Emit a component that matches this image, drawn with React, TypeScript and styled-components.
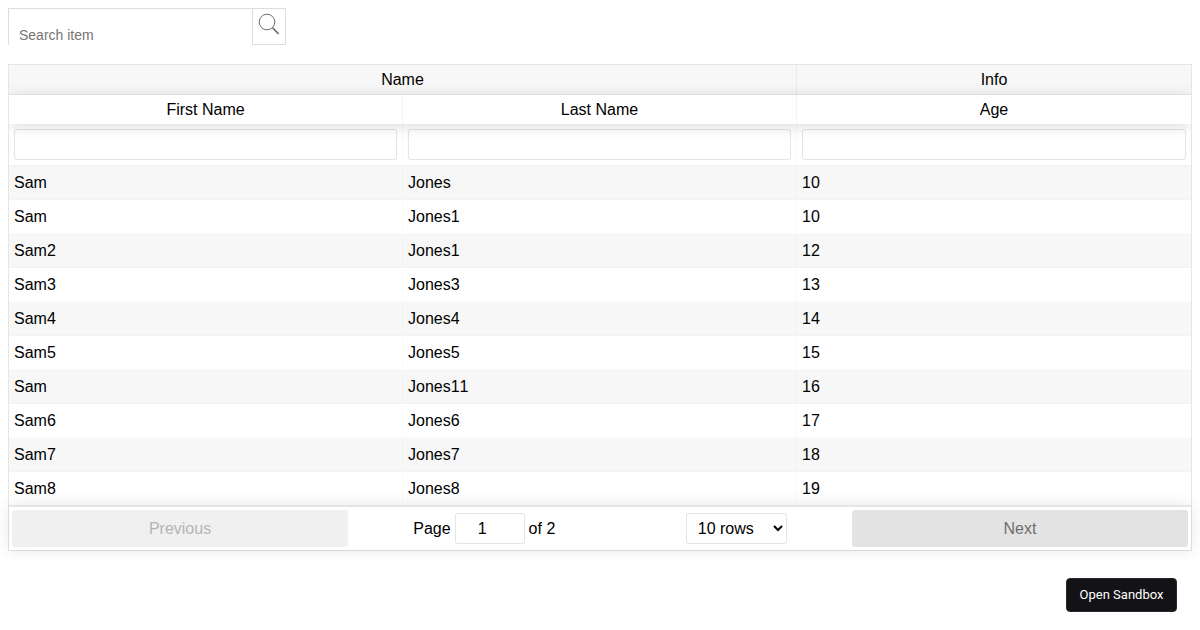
import React from "react";
import styled, { createGlobalStyle } from "styled-components";

const Global = createGlobalStyle`
  html, body { margin: 0; padding: 0; background: #fff; }
  body { font-family: "Liberation Sans", Arial, sans-serif; font-size: 16px; color: #000; height: 630px; overflow: hidden; font-kerning: none; }
  * { box-sizing: border-box; }
  input, select, button { font-kerning: none; }
`;

const Page = styled.div`
  padding: 8px 8px 0;
  display: flex;
  flex-direction: column;
`;

const SearchBar = styled.div`
  display: flex;
  height: 37px;
  margin-bottom: 19px;
`;

const SearchInput = styled.input`
  width: 244px;
  height: 37px;
  padding: 15px 10px 0;
  border: 0;
  border-top: 1px solid #ddd;
  border-left: 1px solid #ddd;
  outline: none;
  font: 14px "Liberation Sans", Arial, sans-serif;
  background: #fff;
  &::placeholder { color: #757575; opacity: 1; }
`;

const SearchButton = styled.button`
  width: 34px;
  height: 37px;
  padding: 0;
  border: 1px solid #ddd;
  background: #fff;
  display: flex;
  justify-content: center;
  padding-top: 4px;
`;

const Table = styled.div`
  width: 1184px;
  border: 1px solid rgba(0, 0, 0, 0.1);
  display: flex;
  flex-direction: column;
  position: relative;
`;

const TableBody = styled.div`
  overflow: hidden;
  display: flex;
  flex-direction: column;
`;

const GroupRow = styled.div`
  display: grid;
  grid-template-columns: 788px 394px;
  height: 30px;
  background: #f7f7f7;
  border-bottom: 1px solid rgba(0, 0, 0, 0.05);
`;

const GroupCell = styled.div<{ $last?: boolean }>`
  text-align: center;
  line-height: 29px;
  border-right: ${(p) => (p.$last ? "0" : "1px solid rgba(0, 0, 0, 0.05)")};
`;

const HeadRow = styled.div`
  display: grid;
  grid-template-columns: repeat(3, 394px);
  height: 29px;
  background: #fff;
  box-shadow: 0 2px 15px 0 rgba(0, 0, 0, 0.15);
  position: relative;
  z-index: 1;
`;

const HeadCell = styled.div<{ $last?: boolean }>`
  text-align: center;
  line-height: 29px;
  border-right: ${(p) => (p.$last ? "0" : "1px solid rgba(0, 0, 0, 0.05)")};
`;

const FilterRow = styled.div`
  display: grid;
  grid-template-columns: repeat(3, 394px);
  height: 42px;
  background: #fff;
  border-bottom: 1px solid rgba(0, 0, 0, 0.05);
`;

const FilterCell = styled.div<{ $last?: boolean }>`
  padding: 5px 5px;
  border-right: ${(p) => (p.$last ? "0" : "1px solid rgba(0, 0, 0, 0.02)")};
`;

const FilterInput = styled.input`
  display: block;
  width: 100%;
  height: 31px;
  border: 1px solid rgba(0, 0, 0, 0.1);
  border-radius: 3px;
  background: #fff;
  outline: none;
`;

const Row = styled.div<{ $odd: boolean }>`
  display: grid;
  grid-template-columns: repeat(3, 394px);
  height: 34px;
  background: ${(p) => (p.$odd ? "rgba(0, 0, 0, 0.03)" : "#fff")};
  border-bottom: 1px solid rgba(0, 0, 0, 0.02);
  &:last-child {
    height: 33px;
    border-bottom: 0;
  }
`;

const Cell = styled.div<{ $last?: boolean }>`
  padding: 0 5px;
  line-height: 33px;
  border-right: ${(p) => (p.$last ? "0" : "1px solid rgba(0, 0, 0, 0.02)")};
`;

const Pagination = styled.div`
  display: grid;
  grid-template-columns: 1fr 1.5fr 1fr;
  height: 45px;
  padding: 3px;
  border-top: 2px solid rgba(0, 0, 0, 0.1);
  box-shadow: 0 0 15px 0 rgba(0, 0, 0, 0.1);
  background: #fff;
  position: relative;
  z-index: 3;
`;

const PageButton = styled.button<{ $dim?: boolean }>`
  height: 37px;
  border: 0;
  border-radius: 3px;
  background: ${(p) => (p.$dim ? "#f0f0f0" : "#e3e3e3")};
  color: ${(p) => (p.$dim ? "#b5b5b5" : "#6e6e6e")};
  font: 16px "Liberation Sans", Arial, sans-serif;
  padding: 0;
`;

const Center = styled.div`
  display: flex;
  align-items: center;
  justify-content: space-around;
  height: 37px;
`;

const PageInfo = styled.span`
  display: flex;
  align-items: center;
  gap: 4px;
`;

const PageInput = styled.input`
  width: 70px;
  height: 31px;
  border: 1px solid rgba(0, 0, 0, 0.1);
  border-radius: 3px;
  background: #fff;
  text-align: center;
  font: 16px "Liberation Sans", Arial, sans-serif;
  outline: none;
  padding: 0 15px 0 0;
`;

const RowsSelect = styled.select`
  width: 101px;
  height: 31px;
  border: 1px solid rgba(0, 0, 0, 0.1);
  border-radius: 3px;
  background: #fff;
  font: 16px "Liberation Sans", Arial, sans-serif;
  padding: 0 7px;
  outline: none;
`;

const SandboxLink = styled.a`
  position: absolute;
  left: 1066px;
  top: 578px;
  width: 111px;
  height: 34px;
  background: #131217;
  border: 1px solid #2a2a2e;
  border-radius: 4px;
  color: #fff;
  font: 13px/32px Roboto, "Liberation Sans", sans-serif;
  text-align: center;
  text-decoration: none;
`;

const data: [string, string, number][] = [
  ["Sam", "Jones", 10],
  ["Sam", "Jones1", 10],
  ["Sam2", "Jones1", 12],
  ["Sam3", "Jones3", 13],
  ["Sam4", "Jones4", 14],
  ["Sam5", "Jones5", 15],
  ["Sam", "Jones11", 16],
  ["Sam6", "Jones6", 17],
  ["Sam7", "Jones7", 18],
  ["Sam8", "Jones8", 19],
];

export default function App() {
  return (
    <>
      <Global />
      <Page>
        <SearchBar>
          <SearchInput placeholder="Search item" />
          <SearchButton aria-label="Search">
            <svg width="22" height="23" viewBox="0 0 22 23" fill="none" stroke="#6f6f6f">
              <circle cx="9" cy="9" r="7.8" strokeWidth="1" />
              <path d="M14.6 14.8 L20.6 20.8" strokeWidth="1.7" />
            </svg>
          </SearchButton>
        </SearchBar>
        <Table>
          <TableBody>
            <GroupRow>
              <GroupCell>Name</GroupCell>
              <GroupCell $last>Info</GroupCell>
            </GroupRow>
            <HeadRow>
              <HeadCell>First Name</HeadCell>
              <HeadCell>Last Name</HeadCell>
              <HeadCell $last>Age</HeadCell>
            </HeadRow>
            <FilterRow>
              <FilterCell><FilterInput /></FilterCell>
              <FilterCell><FilterInput /></FilterCell>
              <FilterCell $last><FilterInput /></FilterCell>
            </FilterRow>
            {data.map(([first, last, age], i) => (
              <Row key={i} $odd={i % 2 === 0}>
                <Cell>{first}</Cell>
                <Cell>{last}</Cell>
                <Cell $last>{age}</Cell>
              </Row>
            ))}
          </TableBody>
          <Pagination>
            <PageButton $dim>Previous</PageButton>
            <Center>
              <PageInfo>
                Page <PageInput defaultValue="1" /> of 2
              </PageInfo>
              <RowsSelect defaultValue="10">
                <option value="10">10 rows</option>
                <option value="20">20 rows</option>
              </RowsSelect>
            </Center>
            <PageButton>Next</PageButton>
          </Pagination>
        </Table>
      </Page>
      <SandboxLink href="#">Open Sandbox</SandboxLink>
    </>
  );
}
